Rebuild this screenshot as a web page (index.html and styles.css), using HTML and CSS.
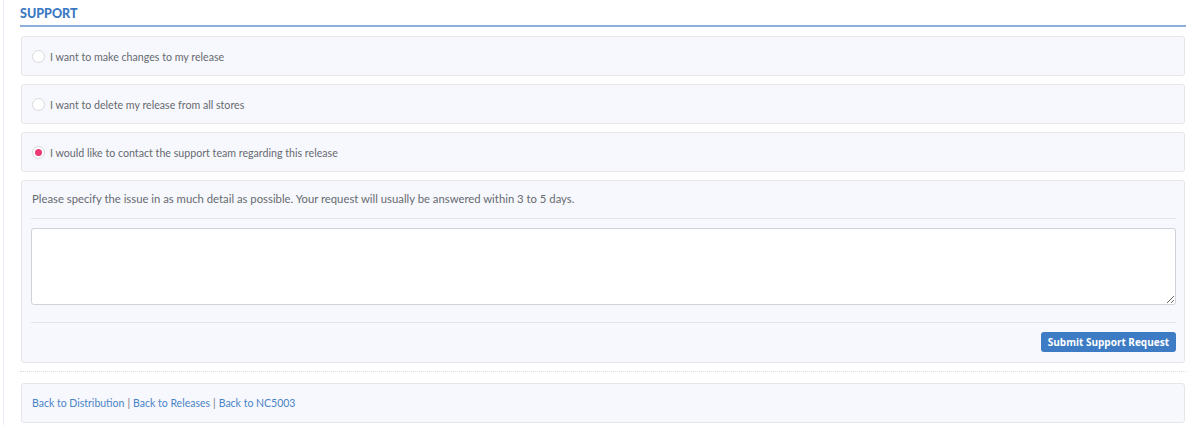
FILE: index.html
```html
<!DOCTYPE html>
<html>
<head>
<meta charset="utf-8">
<link rel="stylesheet" href="styles.css">
</head>
<body>
<div class="frame">
  <h2 class="title">SUPPORT</h2>
  <div class="box option"><span class="radio"></span><span>I want to make changes to my release</span></div>
  <div class="box option"><span class="radio"></span><span>I want to delete my release from all stores</span></div>
  <div class="box option"><span class="radio checked"></span><span>I would like to contact the support team regarding this release</span></div>
  <div class="box request">
    <p class="hint">Please specify the issue in as much detail as possible. Your request will usually be answered within 3 to 5 days.</p>
    <hr class="rule">
    <textarea class="message"></textarea>
    <hr class="rule rule-low">
    <div class="actions"><button class="submit">Submit Support Request</button></div>
  </div>
  <div class="dotted"></div>
  <div class="box links">
    <a href="#">Back to Distribution</a><span class="sep">|</span><a href="#">Back to Releases</a><span class="sep">|</span><a href="#">Back to NC5003</a>
  </div>
</div>
</body>
</html>
```
FILE: styles.css
```css
html, body {
  margin: 0;
  padding: 0;
  background: #ffffff;
}
body {
  font-family: Lato, "Noto Sans", "Liberation Sans", sans-serif;
  color: #666a70;
  font-size: 10.65px;
}
.frame {
  margin-left: 3px;
  border-left: 1px solid #e8eef6;
  padding: 0 14px 0 16px;
  height: 425px;
  box-sizing: border-box;
}
.title {
  margin: 0;
  padding-top: 6px;
  height: 19px;
  line-height: 16px;
  font-size: 12.5px;
  font-weight: 900;
  color: #3a78c3;
  border-bottom: 2px solid #8cafda;
}
.box {
  margin-left: 1px;
  margin-right: 1px;
  background: #f7f8fd;
  border: 1px solid #e4e6ec;
  border-radius: 3px;
}
.option {
  margin-top: 8px;
  height: 40px;
  box-sizing: border-box;
  display: flex;
  align-items: center;
  padding-left: 10px;
  gap: 5px;
}
.title + .option {
  margin-top: 9px;
}
.radio {
  width: 11px;
  height: 11px;
  border: 1px solid #d6d8dc;
  border-radius: 50%;
  background: #fff;
  display: flex;
  align-items: center;
  justify-content: center;
  flex: none;
}
.radio.checked::after {
  content: "";
  width: 7px;
  height: 7px;
  border-radius: 50%;
  background: #ec3a76;
}
.request {
  margin-top: 8px;
  padding: 9px 8px 10px 9px;
}
.hint {
  margin: 0;
  line-height: 18px;
  padding-left: 1px;
  font-size: 11.3px;
}
.rule {
  margin: 10px 0 9px 0;
  border: 0;
  border-top: 1px solid #e2e4ea;
  height: 0;
}
.rule-low {
  margin-top: 17px;
}
.message {
  display: block;
  width: 100%;
  height: 77px;
  box-sizing: border-box;
  border: 1px solid #cfd2d8;
  border-radius: 3px;
  background: #fff;
  margin: 0;
}
.actions {
  display: flex;
  justify-content: flex-end;
}
.submit {
  height: 20px;
  padding: 0 7px;
  border: 0;
  border-radius: 3px;
  background: #3d7cc4;
  color: #fff;
  font-family: "Open Sans", "Liberation Sans", sans-serif;
  font-weight: 700;
  font-size: 10px;
  line-height: 20px;
}
.dotted {
  margin-top: 8px;
  border-top: 1px dotted #d9dbe0;
  height: 0;
}
.links {
  margin-top: 11px;
  height: 40px;
  box-sizing: border-box;
  display: flex;
  align-items: center;
  padding-left: 10px;
  font-size: 10.5px;
}
.links a {
  color: #4a84c6;
  text-decoration: none;
}
.sep {
  margin: 0 3px;
  color: #777;
}
```
